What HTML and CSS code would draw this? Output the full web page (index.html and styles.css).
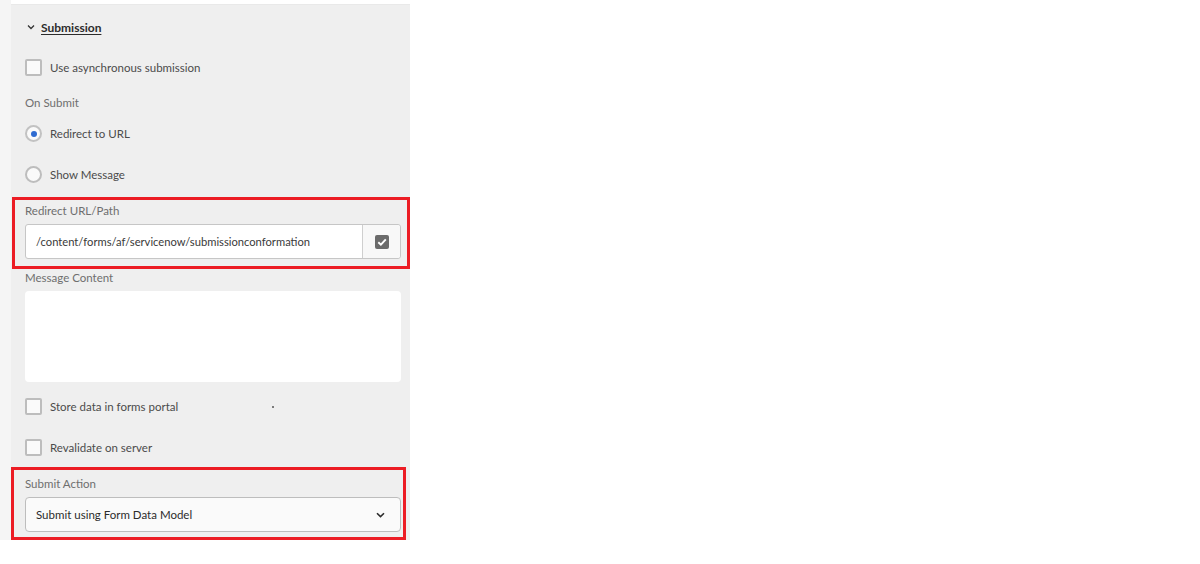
FILE: index.html
```html
<!DOCTYPE html>
<html>
<head>
<meta charset="utf-8">
<link rel="stylesheet" href="styles.css">
</head>
<body>
<div class="sidebar">
  <div class="strip"></div>
  <div class="panel">
    <div class="section-head">
      <svg class="chev" width="8" height="6" viewBox="0 0 8 6"><path d="M1 1.5 L4 4.5 L7 1.5" fill="none" stroke="#333" stroke-width="1.3"/></svg>
      <span class="section-title">Submission</span>
    </div>

    <div class="check-row first"><span class="box"></span><span class="lbl">Use asynchronous submission</span></div>

    <div class="field-label on-submit">On Submit</div>

    <div class="radio-row r1"><span class="radio checked"></span><span class="lbl">Redirect to URL</span></div>
    <div class="radio-row r2"><span class="radio"></span><span class="lbl">Show Message</span></div>

    <div class="hl hl1">
      <div class="field-label">Redirect URL/Path</div>
      <div class="input">
        <span class="input-text">/content/forms/af/servicenow/submissionconformation</span>
        <span class="input-btn">
          <svg width="14" height="14" viewBox="0 0 14 14"><rect x="0" y="0" width="14" height="14" rx="2" fill="#6b6b6b"/><path d="M3.3 7.2 L5.9 9.7 L10.8 4.3" fill="none" stroke="#fff" stroke-width="1.9"/></svg>
        </span>
      </div>
    </div>

    <div class="field-label msg-label">Message Content</div>
    <div class="textarea"></div>

    <div class="check-row store"><span class="box"></span><span class="lbl">Store data in forms portal</span><span class="dot"></span></div>
    <div class="check-row reval"><span class="box"></span><span class="lbl">Revalidate on server</span></div>

    <div class="hl hl2">
      <div class="field-label">Submit Action</div>
      <div class="select">
        <span class="select-text">Submit using Form Data Model</span>
        <svg width="9" height="6" viewBox="0 0 9 6"><path d="M1 1.2 L4.5 4.6 L8 1.2" fill="none" stroke="#2c2c2c" stroke-width="1.6"/></svg>
      </div>
    </div>
  </div>
</div>
</body>
</html>
```
FILE: styles.css
```css
* { box-sizing: border-box; }
html, body { margin: 0; padding: 0; background: #ffffff; }
body { font-family: "Lato", "Liberation Sans", sans-serif; font-size: 11.5px; color: #4b4b4b; }

.sidebar { display: flex; width: 410px; height: 540px; }
.strip { width: 11px; background: #f5f5f5; }
.panel {
  flex: 1;
  background: #efefef;
  border-top: 1px solid #e9e9e9;
  margin-top: 4px;
  padding: 13px 9px 0 14px;
  display: flex;
  flex-direction: column;
}

.section-head { display: flex; align-items: center; height: 18px; padding-left: 2px; gap: 6px; }
.section-title { font-weight: 700; color: #2c2c2c; text-decoration: underline; text-underline-offset: 2px; font-size: 12px; }

.check-row, .radio-row { display: flex; align-items: center; height: 17px; gap: 8px; }
.check-row.first { margin-top: 23px; }
.box { width: 17px; height: 17px; border: 2px solid #bdbdbd; background: #fafafa; border-radius: 2px; flex: none; }
.lbl { color: #4b4b4b; line-height: 17px; }

.field-label { line-height: 16px; color: #6e6e6e; }
.on-submit { margin-top: 19px; }

.radio { width: 17px; height: 17px; border-radius: 50%; border: 2px solid #bdbdbd; background: #fafafa; flex: none; position: relative; }
.radio.checked { border-color: #c2c2c2; }
.radio.checked::after { content: ""; position: absolute; left: 3.5px; top: 3.5px; width: 6px; height: 6px; border-radius: 50%; background: #2f6bd1; }
.r1 { margin-top: 14px; }
.r2 { margin-top: 24px; }

.hl { border: 3px solid #ec1c24; display: flex; flex-direction: column; }
.hl1 { margin: 14px -9px 0 -13px; padding: 3px 6px 7px 10px; }
.hl2 { margin: 11px -5px 0 -14px; padding: 6px 2px 5px 11px; }

.input { margin-top: 5px; height: 35px; display: flex; border: 1px solid #c6c6c6; border-radius: 3px; background: #fff; }
.input-text { flex: 1; display: flex; align-items: center; padding-left: 10px; color: #3a3a3a; font-size: 11.2px; }
.input-btn { width: 38px; display: flex; align-items: center; justify-content: center; border-left: 1px solid #cfcfcf; background: #f8f8f8; border-radius: 0 3px 3px 0; }

.msg-label { margin-top: 1px; }
.textarea { margin-top: 5px; height: 91px; background: #ffffff; border-radius: 4px; }

.store { margin-top: 16px; position: relative; }
.dot { position: absolute; left: 247px; top: 8px; width: 2px; height: 2px; background: #555; border-radius: 50%; }
.reval { margin-top: 24px; }

.select { margin-top: 5px; height: 35px; display: flex; align-items: center; justify-content: space-between; padding: 0 15px 0 10px; border: 1px solid #bdbdbd; border-radius: 4px; background: #fafafa; }
.select-text { color: #2c2c2c; }
```
